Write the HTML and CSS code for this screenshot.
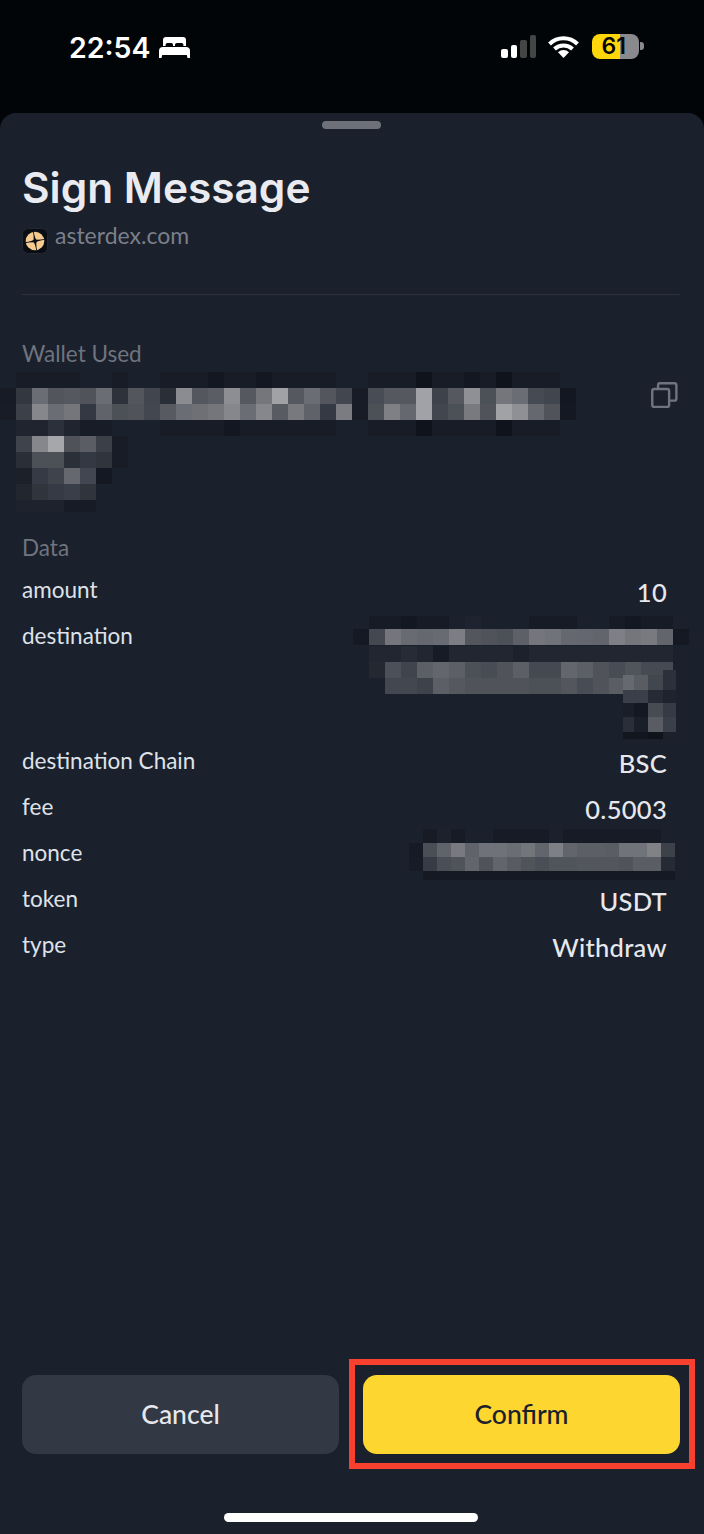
FILE: index.html
```html
<!DOCTYPE html>
<html lang="en">
<head>
  <meta charset="UTF-8" />
  <meta name="viewport" content="width=device-width, initial-scale=1.0" />
  <title>Sign Message</title>
  <link rel="stylesheet" href="styles.css">
</head>
<body>
  <div class="status-bar">
    <div class="status-left">
      <span class="clock">22:54</span>
      <svg class="bed-icon" viewBox="0 0 31 21" fill="#fff">
        <path fill-rule="evenodd" d="M7 0h17a3 3 0 0 1 3 3v6h-2.600V7.800a1.800 1.800 0 0 0-1.800-1.800h-4.800a1.800 1.800 0 0 0-1.800 1.800V9h-2V7.800a1.800 1.800 0 0 0-1.800-1.800H8.400a1.800 1.800 0 0 0-1.800 1.800V9H4V3a3 3 0 0 1 3-3z"/>
        <path d="M4 10h23a4 4 0 0 1 4 4v7h-2.500l-.7-3H3.200l-.7 3H0v-7a4 4 0 0 1 4-4z"/>
      </svg>
    </div>
    <div class="status-right">
      <div class="signal">
        <span class="bar bar-1"></span>
        <span class="bar bar-2"></span>
        <span class="bar bar-3"></span>
        <span class="bar bar-4"></span>
      </div>
      <svg class="wifi-icon" viewBox="0 0 31 23" fill="none" stroke="#fff" stroke-width="4">
        <path d="M1.500 9a20 20 0 0 1 28 0"/>
        <path d="M6.500 14a13 13 0 0 1 18 0"/>
        <path d="M15.500 23L10 17.300a8 8 0 0 1 11 0z" fill="#fff" stroke="none"/>
      </svg>
      <div class="battery">
        <span class="battery-level">61</span>
        <span class="battery-cap"></span>
      </div>
    </div>
  </div>

  <main class="sheet">
    <div class="handle"></div>
    <h1 class="title">Sign Message</h1>
    <div class="site">
      <svg class="site-logo" viewBox="0 0 26 26">
        <rect x="0.500" y="0.500" width="25" height="25" rx="6" fill="#0a0d13" stroke="#232834"/>
        <circle cx="13" cy="13" r="9.300" fill="#f5cb90"/>
        <g transform="rotate(-10 13 13)">
          <path d="M13 3.700V22.300M3.700 13H22.300" stroke="#1b202c" stroke-width="0.900"/>
          <path d="M13 7l1.300 4.700 4.700 1.300-4.700 1.300-1.300 4.700-1.300-4.700-4.700-1.300 4.700-1.300z" fill="#0b0e14"/>
        </g>
      </svg>
      <span class="site-name">asterdex.com</span>
    </div>
    <div class="divider"></div>

    <div class="field-label wallet-label">Wallet Used</div>
    <div class="wallet-row">
      <svg class="wallet-mosaic" width="576" height="140" shape-rendering="crispEdges">
        <g class="cells" fill="#171c27">
          <rect x="16"/><rect x="32"/><rect x="48"/><rect x="64"/><rect x="112"/><rect x="160"/><rect x="176"/><rect x="192"/><rect x="208" fill="#131722"/><rect x="224"/><rect x="240"/><rect x="256" fill="#131722"/><rect x="272"/><rect x="288"/><rect x="304"/><rect x="320"/>
          <rect x="368"/><rect x="384"/><rect x="400"/><rect x="416" fill="#0f131b"/><rect x="432"/><rect x="448"/><rect x="464" fill="#131722"/><rect x="480"/><rect x="496" fill="#0f131b"/><rect x="512"/><rect x="528"/><rect x="544"/>
        </g>
        <g class="cells" transform="translate(0,16)">
          <rect x="0" fill="#171b26"/><rect x="16" fill="#33373f"/><rect x="32" fill="#6a6d73"/><rect x="48" fill="#52555c"/><rect x="64" fill="#55585f"/><rect x="80" fill="#50535a"/><rect x="96" fill="#6a6d73"/><rect x="112" fill="#2e323b"/><rect x="128" fill="#53565d"/><rect x="144" fill="#40454e"/><rect x="160" fill="#2a2e37"/><rect x="176" fill="#8a8c92"/><rect x="192" fill="#54575e"/><rect x="208" fill="#5a5d64"/><rect x="224" fill="#8c8e93"/><rect x="240" fill="#55585f"/><rect x="256" fill="#74767c"/><rect x="272" fill="#a0a2a6"/><rect x="288" fill="#55585f"/><rect x="304" fill="#6a6d73"/><rect x="320" fill="#53565d"/><rect x="336" fill="#42464e"/>
          <rect x="352" fill="#171c27"/><rect x="368" fill="#484d55"/><rect x="384" fill="#55585f"/><rect x="400" fill="#55585f"/><rect x="416" fill="#a0a2a8"/><rect x="432" fill="#3d424b"/><rect x="448" fill="#55585f"/><rect x="464" fill="#8e9096"/><rect x="480" fill="#4c5057"/><rect x="496" fill="#74767c"/><rect x="512" fill="#6a6d73"/><rect x="528" fill="#464a53"/><rect x="544" fill="#40454e"/><rect x="560" fill="#131721"/>
        </g>
        <g class="cells" transform="translate(0,32)">
          <rect x="0" fill="#171c27"/><rect x="16" fill="#3c4049"/><rect x="32" fill="#85878c"/><rect x="48" fill="#6a6d73"/><rect x="64" fill="#74767c"/><rect x="80" fill="#343842"/><rect x="96" fill="#606369"/><rect x="112" fill="#4c5057"/><rect x="128" fill="#505359"/><rect x="144" fill="#434750"/><rect x="160" fill="#575a60"/><rect x="176" fill="#6a6d73"/><rect x="192" fill="#6e7076"/><rect x="208" fill="#74767c"/><rect x="224" fill="#85878c"/><rect x="240" fill="#6a6d73"/><rect x="256" fill="#85878c"/><rect x="272" fill="#585b61"/><rect x="288" fill="#77797e"/><rect x="304" fill="#5f6268"/><rect x="320" fill="#353943"/><rect x="336" fill="#7a7c81"/>
          <rect x="352" fill="#171c27"/><rect x="368" fill="#4c5057"/><rect x="384" fill="#7e8085"/><rect x="400" fill="#65686e"/><rect x="416" fill="#a0a2a8"/><rect x="432" fill="#42464f"/><rect x="448" fill="#4c5057"/><rect x="464" fill="#787a80"/><rect x="480" fill="#50535a"/><rect x="496" fill="#a0a2a6"/><rect x="512" fill="#8e9096"/><rect x="528" fill="#65686e"/><rect x="544" fill="#50535a"/><rect x="560" fill="#141822"/>
        </g>
        <g class="cells" transform="translate(0,48)" fill="#171c27">
          <rect x="16" fill="#20242e"/><rect x="32" fill="#20242e"/><rect x="48" fill="#2c303a"/><rect x="64" fill="#20242e"/><rect x="80"/><rect x="96"/><rect x="160"/><rect x="176"/><rect x="192"/><rect x="208"/><rect x="224" fill="#131722"/><rect x="240"/><rect x="256"/><rect x="272"/><rect x="288"/><rect x="304"/><rect x="320"/>
          <rect x="368"/><rect x="384"/><rect x="400"/><rect x="416" fill="#0f131b"/><rect x="432"/><rect x="448"/><rect x="464"/><rect x="480"/><rect x="496" fill="#0f131b"/><rect x="512"/><rect x="528"/><rect x="544"/>
        </g>
        <g class="cells" transform="translate(0,64)">
          <rect x="16" fill="#3f434c"/><rect x="32" fill="#85878c"/><rect x="48" fill="#a5a7aa"/><rect x="64" fill="#4f5259"/><rect x="80" fill="#5a5d64"/><rect x="96" fill="#3a3f48"/><rect x="112" fill="#171c27"/>
        </g>
        <g class="cells" transform="translate(0,80)">
          <rect x="16" fill="#2a2e37"/><rect x="32" fill="#4c5057"/><rect x="48" fill="#4c5057"/><rect x="64" fill="#2b2f38"/><rect x="80" fill="#343842"/><rect x="96" fill="#30343d"/><rect x="112" fill="#181c27"/>
        </g>
        <g class="cells" transform="translate(0,96)">
          <rect x="16" fill="#1c2029"/><rect x="32" fill="#363a44"/><rect x="48" fill="#3f434c"/><rect x="64" fill="#65686e"/><rect x="80" fill="#414650"/><rect x="96" fill="#141822"/>
        </g>
        <g class="cells" transform="translate(0,112)">
          <rect x="16" fill="#22262f"/><rect x="32" fill="#30343d"/><rect x="48" fill="#363a44"/><rect x="64" fill="#3a3e48"/><rect x="80" fill="#30343d"/>
        </g>
        <g class="cells" transform="translate(0,128)" fill="#1e222c">
          <rect x="16"/><rect x="32"/><rect x="48"/><rect x="64" fill="#171b26"/><rect x="80" fill="#171b26"/>
        </g>
      </svg>
      <svg class="copy-icon" viewBox="0 0 28 28" fill="none" stroke="#70747e" stroke-width="2.500">
        <rect x="1.300" y="7.300" width="17.500" height="18.500" rx="2"/>
        <path d="M7.300 6.800V3.300a2 2 0 0 1 2-2h15a2 2 0 0 1 2 2v14a2 2 0 0 1-2 2h-5"/>
      </svg>
    </div>

    <div class="field-label data-label">Data</div>
    <div class="data-rows">
      <div class="data-row">
        <span class="data-key">amount</span>
        <span class="data-value">10</span>
      </div>
      <div class="data-row data-row-tall">
        <span class="data-key">destination</span>
        <svg class="dest-mosaic" width="336" height="123" shape-rendering="crispEdges">
          <g class="cells" fill="#171b26">
            <rect x="16"/><rect x="32"/><rect x="48" fill="#131722"/><rect x="64"/><rect x="80"/><rect x="112" fill="#1f2330"/><rect x="176"/><rect x="192"/><rect x="208"/><rect x="256"/><rect x="272" fill="#131722"/><rect x="288"/><rect x="304"/>
          </g>
          <g class="cells" transform="translate(0,13)">
            <rect x="0" fill="#151924"/><rect x="16" fill="#444850"/><rect x="32" fill="#74767c"/><rect x="48" fill="#686b71"/><rect x="64" fill="#65686e"/><rect x="80" fill="#686b71"/><rect x="96" fill="#7c7e83"/><rect x="112" fill="#53565d"/><rect x="128" fill="#50535a"/><rect x="144" fill="#4c5057"/><rect x="160" fill="#5d6066"/><rect x="176" fill="#74767c"/><rect x="192" fill="#70737a"/><rect x="208" fill="#65686e"/><rect x="224" fill="#646770"/><rect x="240" fill="#62656b"/><rect x="256" fill="#7e8086"/><rect x="272" fill="#74767c"/><rect x="288" fill="#787a80"/><rect x="304" fill="#62656b"/><rect x="320" fill="#151923"/>
          </g>
          <g class="cells" transform="translate(0,30)" fill="#222630">
            <rect x="16"/><rect x="32"/><rect x="48" fill="#272b35"/><rect x="64"/><rect x="80" fill="#171b26"/><rect x="96"/><rect x="112"/><rect x="128"/><rect x="144"/><rect x="160" fill="#1d212c"/><rect x="176"/><rect x="192"/><rect x="208"/><rect x="224"/><rect x="240"/><rect x="256"/><rect x="272"/><rect x="288"/><rect x="304"/>
          </g>
          <g class="cells" transform="translate(0,46)">
            <rect x="16" fill="#242831"/><rect x="32" fill="#4c5159"/><rect x="48" fill="#3f444d"/><rect x="64" fill="#5c5f66"/><rect x="80" fill="#63666c"/><rect x="96" fill="#5c5f66"/><rect x="112" fill="#4c5057"/><rect x="128" fill="#484d55"/><rect x="144" fill="#50535a"/><rect x="160" fill="#5c5f66"/><rect x="176" fill="#454952"/><rect x="192" fill="#454952"/><rect x="208" fill="#63666c"/><rect x="224" fill="#5c5f66"/><rect x="240" fill="#50535a"/><rect x="256" fill="#484d55"/><rect x="272" fill="#50545b"/><rect x="288" fill="#464a53"/><rect x="304" fill="#464a53"/>
          </g>
          <g class="cells" transform="translate(0,62)">
            <rect x="32" fill="#434750"/><rect x="48" fill="#434750"/><rect x="64" fill="#3d424b"/><rect x="80" fill="#5c5f66"/><rect x="96" fill="#55585f"/><rect x="112" fill="#50535a"/><rect x="128" fill="#50535a"/><rect x="144" fill="#50535a"/><rect x="160" fill="#50535a"/><rect x="176" fill="#4c5057"/><rect x="192" fill="#4c5057"/><rect x="208" fill="#53565d"/><rect x="224" fill="#484d55"/><rect x="240" fill="#50535a"/><rect x="256" fill="#5a5d64"/>
          </g>
          <rect x="270" y="59" width="11" height="15" fill="#666a70"/><rect x="281" y="59" width="14" height="15" fill="#595c63"/><rect x="295" y="59" width="15" height="15" fill="#41464f"/><rect x="310" y="54" width="13" height="20" fill="#2b303a"/>
          <rect x="270" y="74" width="25" height="13" fill="#3b3f49"/><rect x="295" y="74" width="15" height="13" fill="#252a34"/><rect x="310" y="74" width="13" height="13" fill="#1e232d"/>
          <rect x="270" y="87" width="11" height="14" fill="#1a1e29"/><rect x="281" y="87" width="14" height="14" fill="#141823"/><rect x="295" y="87" width="15" height="14" fill="#474b54"/><rect x="310" y="87" width="13" height="14" fill="#363a44"/>
          <rect x="270" y="101" width="11" height="15" fill="#2a2e38"/><rect x="281" y="101" width="14" height="15" fill="#1a1e29"/><rect x="295" y="101" width="15" height="15" fill="#595c63"/><rect x="310" y="101" width="13" height="15" fill="#3b3f49"/>
          <rect x="270" y="116" width="25" height="7" fill="#12161f"/><rect x="295" y="116" width="15" height="7" fill="#0f131c"/><rect x="310" y="116" width="13" height="7" fill="#1c202b"/>
        </svg>
      </div>
      <div class="data-row">
        <span class="data-key">destination Chain</span>
        <span class="data-value">BSC</span>
      </div>
      <div class="data-row">
        <span class="data-key">fee</span>
        <span class="data-value">0.5003</span>
      </div>
      <div class="data-row">
        <span class="data-key">nonce</span>
        <svg class="nonce-mosaic" width="268" height="51" shape-rendering="crispEdges">
          <g class="cells-small" fill="#171b26">
            <rect x="14"/><rect x="28" fill="#1d212c"/><rect x="42"/><rect x="84"/><rect x="98"/><rect x="112"/><rect x="126"/><rect x="154"/><rect x="168"/><rect x="182"/><rect x="196"/><rect x="210"/><rect x="224"/><rect x="238"/>
          </g>
          <g class="cells-small" transform="translate(0,14)">
            <rect x="0" fill="#161a25"/><rect x="14" fill="#4a4e56"/><rect x="28" fill="#60636a"/><rect x="42" fill="#787a80"/><rect x="56" fill="#60636a"/><rect x="70" fill="#6f7278"/><rect x="84" fill="#6f7278"/><rect x="98" fill="#6a6d73"/><rect x="112" fill="#72757a"/><rect x="126" fill="#62656b"/><rect x="140" fill="#7e8086"/><rect x="154" fill="#62656b"/><rect x="168" fill="#5c5f66"/><rect x="182" fill="#5c5f66"/><rect x="196" fill="#5a5d64"/><rect x="210" fill="#70737a"/><rect x="224" fill="#70737a"/><rect x="238" fill="#808286"/><rect x="252" fill="#3d414a"/>
          </g>
          <g class="cells-small" transform="translate(0,28)">
            <rect x="0" fill="#171b26"/><rect x="14" fill="#373b45"/><rect x="28" fill="#4a4e56"/><rect x="42" fill="#50535a"/><rect x="56" fill="#62656b"/><rect x="70" fill="#50535a"/><rect x="84" fill="#62656b"/><rect x="98" fill="#585b61"/><rect x="112" fill="#50535a"/><rect x="126" fill="#4a4e56"/><rect x="140" fill="#50545b"/><rect x="154" fill="#50545b"/><rect x="168" fill="#53565d"/><rect x="182" fill="#53565d"/><rect x="196" fill="#53565d"/><rect x="210" fill="#50535a"/><rect x="224" fill="#5a5d64"/><rect x="238" fill="#5a5d64"/><rect x="252" fill="#252a34"/>
          </g>
          <g class="cells-small" transform="translate(0,42)" fill="#151924">
            <rect x="14"/><rect x="28"/><rect x="42"/><rect x="56"/><rect x="70"/><rect x="84"/><rect x="98"/><rect x="112"/><rect x="126"/><rect x="140"/><rect x="154"/><rect x="168"/><rect x="182"/><rect x="196"/><rect x="210"/><rect x="224"/><rect x="238"/><rect x="252"/>
          </g>
        </svg>
      </div>
      <div class="data-row">
        <span class="data-key">token</span>
        <span class="data-value">USDT</span>
      </div>
      <div class="data-row">
        <span class="data-key">type</span>
        <span class="data-value">Withdraw</span>
      </div>
    </div>

    <div class="actions">
      <button class="btn btn-cancel">Cancel</button>
      <button class="btn btn-confirm">Confirm</button>
      <div class="highlight"></div>
    </div>
    <div class="home-indicator"></div>
  </main>
</body>
</html>
```

FILE: styles.css
```css
* {
  box-sizing: border-box;
}

body {
  font-family: 'Lato', 'Liberation Sans', sans-serif;
  margin: 0;
  padding: 0;
  width: 704px;
  height: 1534px;
  overflow: hidden;
  background-color: #020507;
  display: flex;
  flex-direction: column;
}

/* status bar */
.status-bar {
  height: 113px;
  flex: none;
  display: flex;
  justify-content: space-between;
  padding: 32px 65px 0 69px;
  color: white;
}

.status-left {
  display: flex;
  align-items: flex-start;
  gap: 8px;
}

.clock {
  font-family: 'Inter', sans-serif;
  font-size: 28.500px;
  font-weight: 600;
  line-height: 32px;
}

.bed-icon {
  width: 31px;
  height: 21px;
  margin-top: 5px;
}

.status-right {
  display: flex;
  align-items: flex-start;
  gap: 12px;
}

.signal {
  display: flex;
  align-items: flex-end;
  gap: 3px;
  height: 23px;
  margin-top: 3px;
}

.bar {
  width: 6.500px;
  border-radius: 2px;
  background-color: #fff;
}

.bar-1 { height: 9px; }
.bar-2 { height: 13px; }
.bar-3 { height: 18px; background-color: #444646; }
.bar-4 { height: 23px; background-color: #444646; }

.wifi-icon {
  width: 31px;
  height: 23px;
  margin-top: 3px;
  margin-right: 1px;
}

.battery {
  position: relative;
  width: 47px;
  height: 25px;
  margin-top: 2px;
  border-radius: 8px;
  background: linear-gradient(to right, #ffd60a 28px, #8a8a8e 28px);
  color: #050505;
  font-family: 'Inter', sans-serif;
  font-size: 23px;
  font-weight: 600;
  line-height: 25px;
  text-align: right;
  padding-right: 13px;
}

.battery-cap {
  position: absolute;
  left: 48px;
  top: 8px;
  width: 4px;
  height: 8px;
  border-radius: 0 3px 3px 0;
  background-color: #8a8a8e;
}

/* sheet */
.sheet {
  flex: 1;
  position: relative;
  background-color: #1a202c;
  border-radius: 16px 16px 0 0;
  padding: 8px 24px 0 22px;
  display: flex;
  flex-direction: column;
}

.handle {
  width: 59px;
  height: 8px;
  border-radius: 4px;
  background-color: #6e717a;
  align-self: center;
}

.title {
  margin: 34px 0 0;
  font-family: 'Inter', sans-serif;
  font-size: 42.400px;
  font-weight: 600;
  line-height: 50px;
  color: #e9ebf0;
}

.site {
  display: flex;
  align-items: flex-start;
  gap: 7px;
  margin-top: 15px;
  height: 26px;
}

.site-logo {
  width: 26px;
  height: 26px;
  flex: none;
}

.site-name {
  font-size: 23px;
  line-height: 15px;
  color: #7b7f89;
}

.divider {
  height: 1px;
  background-color: #2c313c;
  margin-top: 40px;
}

.field-label {
  font-size: 22.500px;
  line-height: 28px;
  color: #6f747e;
}

.wallet-label {
  margin-top: 45px;
}

.wallet-row {
  display: flex;
  justify-content: space-between;
  margin-top: 4px;
  height: 140px;
}

.wallet-mosaic {
  margin-left: -22px;
  flex: none;
}

.cells rect {
  width: 16px;
  height: 16px;
}

.cells-small rect {
  width: 14px;
  height: 14px;
}

.copy-icon {
  width: 27px;
  height: 27px;
  margin: 10px 2px 0 0;
}

.data-label {
  margin-top: 22px;
}

.data-rows {
  margin-top: 14px;
  padding-right: 13px;
}

.data-row {
  display: flex;
  justify-content: space-between;
  align-items: flex-start;
  height: 46px;
  font-size: 22.500px;
  line-height: 28px;
}

.data-row-tall {
  height: 125px;
}

.data-key {
  color: #dfe2e8;
}

.data-value {
  padding-top: 2px;
  font-size: 25.500px;
  font-weight: 500;
  letter-spacing: 0.300px;
  color: #e6e8ed;
}

.dest-mosaic {
  margin: -6px -22px 0 0;
  flex: none;
}

.nonce-mosaic {
  margin: -10px -10px 0 0;
  flex: none;
}

/* bottom buttons */
.actions {
  position: absolute;
  left: 22px;
  right: 24px;
  top: 1262px;
  display: flex;
  gap: 24px;
}

.btn {
  flex: 1;
  height: 79px;
  border: none;
  border-radius: 14px;
  padding: 0 0 1px;
  font-family: inherit;
  font-size: 26.500px;
  font-weight: 500;
}

.btn-cancel {
  background-color: #323844;
  color: #e6e8ed;
}

.btn-confirm {
  background-color: #fdd630;
  color: #1a202c;
}

.highlight {
  position: absolute;
  left: 327px;
  top: -16px;
  width: 346px;
  height: 110px;
  border: 6px solid #f9402f;
}

.home-indicator {
  position: absolute;
  left: 224px;
  top: 1400px;
  width: 254px;
  height: 9px;
  border-radius: 5px;
  background-color: #fff;
}
```
